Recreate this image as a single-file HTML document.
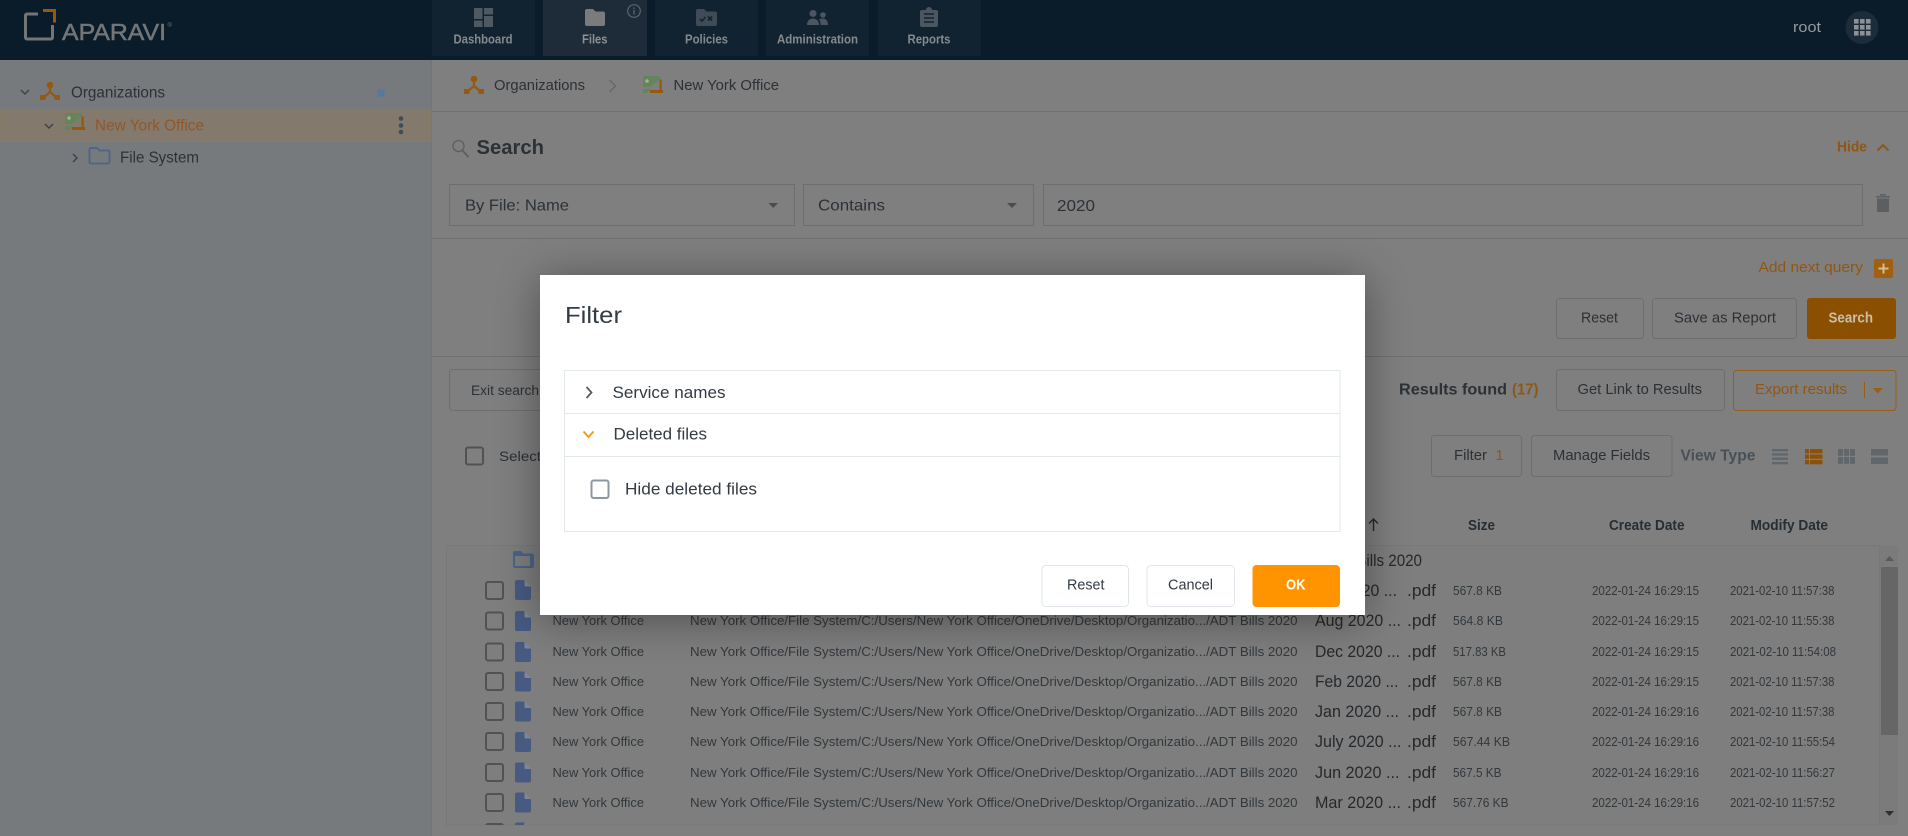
<!DOCTYPE html>
<html lang="en">
<head>
<meta charset="utf-8">
<title>Aparavi - Filter</title>
<style>
html,body{margin:0;padding:0;width:1908px;height:836px;overflow:hidden;background:#7f7f7f}
svg{display:block;position:absolute;left:0;top:0}
svg.root{filter:blur(.35px)}
text{font-family:"Liberation Sans",sans-serif;dominant-baseline:central;fill:#2c3136}
.nav{font-size:13px;font-weight:bold;fill:#858a8f}
.b{font-weight:bold}
.cell{font-size:12.5px;fill:#33383c}
.date{font-size:12.5px;fill:#33383c}
.name{font-size:16.5px;fill:#26292c}
.hd{font-size:14.5px;font-weight:bold;fill:#262e35}
.box{fill:none;stroke:#6c6f71;stroke-width:1}
.o{fill:#8f5716}
.m{fill:#333b43}
</style>
</head>
<body>
<svg class="root" width="1908" height="836" viewBox="0 0 1908 836" xmlns="http://www.w3.org/2000/svg">
<defs>
<g id="org" fill="#96590f">
  <circle cx="10" cy="5" r="3.3"/>
  <path d="M10 5v7M10 12L4 17M10 12l6 5" stroke="#96590f" stroke-width="2.2" fill="none"/>
  <rect x="0" y="15" width="5.5" height="5"/>
  <rect x="14.5" y="15" width="5.5" height="5"/>
</g>
<g id="ny">
  <path d="M0 0h17v3L7 11H0z" fill="#64855a"/>
  <path d="M0 13h9l-5 4H0z" fill="#64855a"/>
  <circle cx="4" cy="5" r="1.8" fill="#a3b09c"/>
  <path d="M16.500 3.500h2.200V14H20v3H7v-3h9.500z" fill="#96590f"/>
</g>
<g id="doc">
  <path d="M2 0h7l7 7v11a2 2 0 0 1-2 2H2a2 2 0 0 1-2-2V2a2 2 0 0 1 2-2z" fill="#465a82"/>
  <path d="M9.500 0v5.500a1 1 0 0 0 1 1H16z" fill="#7d8799"/>
</g>
<path id="fold" d="M2 0h6l2.500 2.500H19a2 2 0 0 1 2 2V15a2 2 0 0 1-2 2H2a2 2 0 0 1-2-2V2a2 2 0 0 1 2-2z"/>
<rect id="cb" width="17" height="17" rx="2" fill="none" stroke="#505355" stroke-width="2"/>
<filter id="shadow" x="-20%" y="-30%" width="140%" height="170%">
  <feGaussianBlur stdDeviation="22"/>
</filter>
</defs>

<!-- base -->
<rect width="1908" height="836" fill="#7f7f7f"/>

<!-- sidebar -->
<rect x="0" y="60" width="431" height="776" fill="#777a7c"/>
<rect x="431" y="60" width="1" height="776" fill="#727475"/>
<path d="M21 90l4 4 4-4" fill="none" stroke="#3c444a" stroke-width="1.500"/>
<use href="#org" x="40" y="80"/>
<text x="71" y="93" font-size="15.500" textLength="94" lengthAdjust="spacingAndGlyphs" fill="#262e35">Organizations</text>
<circle cx="381" cy="93" r="4" fill="#567a9e"/>
<rect x="0" y="109.500" width="431" height="32" fill="#84796d" stroke="#8a7a64"/>
<path d="M45 124l4 4 4-4" fill="none" stroke="#3c444a" stroke-width="1.500"/>
<use href="#ny" x="65" y="113"/>
<text x="95" y="126" font-size="15.500" textLength="109" lengthAdjust="spacingAndGlyphs" style="fill:#90582a">New York Office</text>
<circle cx="401" cy="118.500" r="2.300" fill="#3f4b57"/>
<circle cx="401" cy="125.500" r="2.300" fill="#3f4b57"/>
<circle cx="401" cy="132" r="2.300" fill="#3f4b57"/>
<path d="M73 154l4 4-4 4" fill="none" stroke="#3c444a" stroke-width="1.500"/>
<g transform="translate(89,147)"><path d="M2 1h6l2.500 2.500H19a1.500 1.500 0 0 1 1.500 1.500v10a1.500 1.500 0 0 1-1.500 1.500H2A1.500 1.500 0 0 1 .5 15V2A1.500 1.500 0 0 1 2 1z" fill="none" stroke="#4a648c" stroke-width="1.800"/></g>
<text x="120" y="158" font-size="15.500" textLength="79" lengthAdjust="spacingAndGlyphs" fill="#262e35">File System</text>

<!-- header -->
<rect x="0" y="0" width="1908" height="60" fill="#0a1c29"/>
<g>
  <path d="M38 14H27a1.500 1.500 0 0 0-1.500 1.500v22A1.500 1.500 0 0 0 27 39h24a1.500 1.500 0 0 0 1.500-1.500V25" fill="none" stroke="#737577" stroke-width="3"/>
  <path d="M43 10.500h11.500V22.500" fill="none" stroke="#96590f" stroke-width="3"/>
  <text x="62" y="32" font-size="23" textLength="104" lengthAdjust="spacingAndGlyphs" style="fill:#737577;stroke:#737577;stroke-width:.5">APARAVI</text>
  <text x="167.500" y="26" font-size="6" style="fill:#737577">®</text>
</g>
<rect x="432" y="0" width="103" height="56" fill="#112331"/>
<rect x="543" y="0" width="104" height="56" fill="#1e2c39"/>
<rect x="655" y="0" width="103" height="56" fill="#112331"/>
<rect x="766" y="0" width="103" height="56" fill="#112331"/>
<rect x="878" y="0" width="103" height="56" fill="#112331"/>
<g fill="#4e5962">
  <rect x="474" y="8" width="8.500" height="11"/><rect x="484" y="8" width="9" height="6.500"/>
  <rect x="474" y="20.500" width="8.500" height="6.500"/><rect x="484" y="16" width="9" height="11"/>
</g>
<path d="M587 9h6l2.500 2.500H603a2 2 0 0 1 2 2V24a2 2 0 0 1-2 2H587a2 2 0 0 1-2-2V11a2 2 0 0 1 2-2z" fill="#7a7b7c"/>
<circle cx="634" cy="11" r="6.300" fill="none" stroke="#596570" stroke-width="1.200"/>
<rect x="633.300" y="10" width="1.400" height="4.500" fill="#596570"/><rect x="633.300" y="7.500" width="1.400" height="1.400" fill="#596570"/>
<path d="M698 9h6l2.500 2.500H715a2 2 0 0 1 2 2V24a2 2 0 0 1-2 2H698a2 2 0 0 1-2-2V11a2 2 0 0 1 2-2z" fill="#3f4b57"/>
<path d="M700 19l2 2 3.500-4M708 16.500l4 4M712 16.500l-4 4" fill="none" stroke="#112331" stroke-width="1.600"/>
<g fill="#4b5660">
  <circle cx="813" cy="13.500" r="3.500"/><circle cx="823" cy="15" r="2.800"/>
  <path d="M807 25c0-4 2.500-6.500 6-6.500s6 2.500 6 6.500z"/><path d="M820.500 25c0-3-.500-4.500-1.500-5.500 1-.7 2.500-1 4-1 3 0 5 2.500 5 6.500z"/>
</g>
<path d="M922 10h4a3 3 0 0 1 6 0h4a2 2 0 0 1 2 2v13a2 2 0 0 1-2 2h-14a2 2 0 0 1-2-2V12a2 2 0 0 1 2-2z" fill="#4b5660"/>
<path d="M924 14h10M924 18h10M924 22h10" stroke="#112331" stroke-width="1.600"/>
<text class="nav" x="453.500" y="39" textLength="59" lengthAdjust="spacingAndGlyphs">Dashboard</text>
<text class="nav" x="582" y="39" textLength="25.500" lengthAdjust="spacingAndGlyphs" style="fill:#8e9193">Files</text>
<text class="nav" x="685" y="39" textLength="43" lengthAdjust="spacingAndGlyphs">Policies</text>
<text class="nav" x="777" y="39" textLength="81" lengthAdjust="spacingAndGlyphs">Administration</text>
<text class="nav" x="907.500" y="39" textLength="43" lengthAdjust="spacingAndGlyphs">Reports</text>
<text x="1793" y="27.500" font-size="15" textLength="28" lengthAdjust="spacingAndGlyphs" style="fill:#969b9f">root</text>
<circle cx="1862" cy="27.500" r="16.500" fill="#1c2c3a"/>
<g fill="#8c9196">
  <rect x="1854" y="19" width="4.600" height="4.600"/><rect x="1860" y="19" width="4.600" height="4.600"/><rect x="1866" y="19" width="4.600" height="4.600"/>
  <rect x="1854" y="25" width="4.600" height="4.600"/><rect x="1860" y="25" width="4.600" height="4.600"/><rect x="1866" y="25" width="4.600" height="4.600"/>
  <rect x="1854" y="31" width="4.600" height="4.600"/><rect x="1860" y="31" width="4.600" height="4.600"/><rect x="1866" y="31" width="4.600" height="4.600"/>
</g>

<!-- breadcrumb -->
<use href="#org" x="464" y="74"/>
<text x="494" y="86" font-size="14.500" textLength="91" lengthAdjust="spacingAndGlyphs" fill="#30363b">Organizations</text>
<path d="M609.500 80l6 6-6 6" fill="none" stroke="#666" stroke-width="1.300"/>
<use href="#ny" x="643" y="76"/>
<text x="673.500" y="86" font-size="14.500" textLength="105.500" lengthAdjust="spacingAndGlyphs" fill="#30363b">New York Office</text>
<rect x="432" y="111" width="1476" height="1" fill="#6f6f6f"/>

<!-- search -->
<circle cx="458.500" cy="146" r="5.500" fill="none" stroke="#5c5f61" stroke-width="1.300"/>
<path d="M462.500 150.500l6 6.500" stroke="#5c5f61" stroke-width="1.800"/>
<text x="476.500" y="148" font-size="20" class="b" textLength="67.500" lengthAdjust="spacingAndGlyphs" fill="#1c2025">Search</text>
<text class="o" x="1837" y="147.500" font-size="14.500" font-weight="bold" textLength="30" lengthAdjust="spacingAndGlyphs">Hide</text>
<path d="M1877.500 150.500l5.500-5.500 5.500 5.500" fill="none" stroke="#8f5716" stroke-width="2"/>
<rect class="box" x="449.500" y="184.500" width="345" height="41"/>
<text x="465" y="206" font-size="16" textLength="104" lengthAdjust="spacingAndGlyphs">By File: Name</text>
<path d="M768.500 203h9.500l-4.750 5z" fill="#4a4d50"/>
<rect class="box" x="803.500" y="184.500" width="230" height="41"/>
<text x="818" y="206" font-size="16" textLength="67" lengthAdjust="spacingAndGlyphs">Contains</text>
<path d="M1007 203h10l-5 5z" fill="#4a4d50"/>
<rect class="box" x="1043.500" y="184.500" width="819" height="41"/>
<text x="1057" y="206.500" font-size="16" textLength="38" lengthAdjust="spacingAndGlyphs">2020</text>
<path d="M1876 196h14v1.500h-14zM1880 194h6v1.500h-6zM1877 198.500h12V211a1 1 0 0 1-1 1h-10a1 1 0 0 1-1-1z" fill="#5c5f61"/>
<rect x="432" y="238" width="1476" height="1" fill="#6f6f6f"/>
<text class="o" x="1758.500" y="268" font-size="14.500" textLength="104.500" lengthAdjust="spacingAndGlyphs">Add next query</text>
<rect x="1874" y="259" width="19" height="19" rx="2" fill="#a0600d"/>
<path d="M1883.500 263.500v10M1878.500 268.500h10" stroke="#d6bd94" stroke-width="2"/>
<rect class="box" x="1556.500" y="298.500" width="87" height="40" rx="3"/>
<text x="1581" y="318.500" font-size="14.500" textLength="37" lengthAdjust="spacingAndGlyphs">Reset</text>
<rect class="box" x="1652.500" y="298.500" width="144" height="40" rx="3"/>
<text x="1674" y="318.500" font-size="14.500" textLength="102" lengthAdjust="spacingAndGlyphs">Save as Report</text>
<rect x="1807" y="298" width="89" height="41" rx="3" fill="#8a5000"/>
<text x="1828.500" y="318.500" font-size="14.500" font-weight="bold" textLength="44.500" lengthAdjust="spacingAndGlyphs" style="fill:#cbbfac">Search</text>
<rect x="432" y="356" width="1476" height="1" fill="#6f6f6f"/>

<!-- results toolbar -->
<rect class="box" x="449.500" y="369.500" width="160" height="41" rx="3"/>
<text x="471" y="390" font-size="14" textLength="68" lengthAdjust="spacingAndGlyphs">Exit search</text>
<use href="#cb" x="466" y="447.500"/>
<text x="499" y="456" font-size="14" textLength="42" lengthAdjust="spacingAndGlyphs">Select</text>
<text x="1399" y="390" font-size="16" font-weight="bold" textLength="108" lengthAdjust="spacingAndGlyphs" fill="#1e2a33">Results found</text>
<text class="o" x="1512" y="390" font-size="16" font-weight="bold" textLength="26.500" lengthAdjust="spacingAndGlyphs">(17)</text>
<rect class="box" x="1556.500" y="369.500" width="168" height="41" rx="3"/>
<text x="1577.500" y="390" font-size="14.500" textLength="124.500" lengthAdjust="spacingAndGlyphs">Get Link to Results</text>
<rect x="1733.500" y="370.500" width="162.500" height="40" rx="3" fill="none" stroke="#985f18"/>
<text class="o" x="1755" y="390" font-size="14.500" textLength="92" lengthAdjust="spacingAndGlyphs">Export results</text>
<rect x="1864" y="382" width="1" height="16" fill="#985f18"/>
<path d="M1872.500 388h10.500l-5.250 5.500z" fill="#985f18"/>
<rect class="box" x="1431.500" y="435.500" width="90" height="41" rx="3"/>
<text x="1454" y="456" font-size="14.500" textLength="33" lengthAdjust="spacingAndGlyphs">Filter</text>
<text class="o" x="1495.500" y="456" font-size="14.500">1</text>
<rect class="box" x="1531.500" y="435.500" width="140.500" height="41" rx="3"/>
<text x="1553" y="456" font-size="14.500" textLength="97" lengthAdjust="spacingAndGlyphs">Manage Fields</text>
<text x="1680.500" y="456" font-size="16" font-weight="bold" textLength="75" lengthAdjust="spacingAndGlyphs" style="fill:#485058">View Type</text>
<g fill="#5f666c">
  <rect x="1772" y="449" width="16" height="2.300"/><rect x="1772" y="453.300" width="16" height="2.300"/><rect x="1772" y="457.600" width="16" height="2.300"/><rect x="1772" y="462" width="16" height="2.300"/>
</g>
<g fill="#8a5208">
  <rect x="1805" y="449" width="4" height="4.300"/><rect x="1810" y="449" width="12.500" height="4.300"/>
  <rect x="1805" y="454.500" width="4" height="4.300"/><rect x="1810" y="454.500" width="12.500" height="4.300"/>
  <rect x="1805" y="460" width="4" height="4.300"/><rect x="1810" y="460" width="12.500" height="4.300"/>
</g>
<g fill="#5f666c">
  <rect x="1838" y="449" width="5" height="6.800"/><rect x="1844" y="449" width="5" height="6.800"/><rect x="1850" y="449" width="5" height="6.800"/>
  <rect x="1838" y="457" width="5" height="6.800"/><rect x="1844" y="457" width="5" height="6.800"/><rect x="1850" y="457" width="5" height="6.800"/>
  <rect x="1871" y="449" width="17" height="6.500"/><rect x="1871" y="457.500" width="17" height="6.500"/>
</g>

<!-- table header -->
<path d="M1373.500 531v-12M1369 523.500l4.500-4.500 4.500 4.500" fill="none" stroke="#26292c" stroke-width="1.400"/>
<text class="hd" x="1468" y="526" textLength="27" lengthAdjust="spacingAndGlyphs">Size</text>
<text class="hd" x="1609" y="526" textLength="75.500" lengthAdjust="spacingAndGlyphs">Create Date</text>
<text class="hd" x="1750.500" y="526" textLength="77.500" lengthAdjust="spacingAndGlyphs">Modify Date</text>

<!-- table -->
<rect x="446.500" y="545.500" width="1433" height="279.500" fill="#7e7e7e" stroke="#787878"/>
<rect x="1880" y="546" width="18" height="279" fill="#7b7b7b"/>
<rect x="1881" y="567" width="17" height="168" fill="#666"/>
<path d="M1885 561h9l-4.500-5z" fill="#5a5a5a"/>
<path d="M1885 811h9l-4.500 5z" fill="#2f2f2f"/>
<svg x="446" y="546" width="1434" height="279" viewBox="446 546 1434 279">
<use href="#fold" x="513" y="551" style="fill:#4a648c"/><rect x="515" y="556" width="15" height="10" fill="#7e7e7e"/>
<text class="name" x="1322" y="561" textLength="100" lengthAdjust="spacingAndGlyphs">ADT Bills 2020</text>

<use href="#cb" x="486" y="582"/><use href="#doc" x="515" y="580"/>
<text class="name" x="1315" y="591" textLength="82" lengthAdjust="spacingAndGlyphs">Apr 2020 ...</text><text class="name" x="1407" y="591" textLength="29" lengthAdjust="spacingAndGlyphs">.pdf</text>
<text class="cell" x="1453" y="591" textLength="49" lengthAdjust="spacingAndGlyphs">567.8 KB</text>
<text class="date" x="1592" y="591" textLength="107" lengthAdjust="spacingAndGlyphs">2022-01-24 16:29:15</text>
<text class="date" x="1730" y="591" textLength="104.500" lengthAdjust="spacingAndGlyphs">2021-02-10 11:57:38</text>

<use href="#cb" x="486" y="612.500"/><use href="#doc" x="515" y="611"/>
<text class="cell" x="552.500" y="621" textLength="91.500" lengthAdjust="spacingAndGlyphs">New York Office</text>
<text class="cell" x="690" y="621" textLength="607.500" lengthAdjust="spacingAndGlyphs">New York Office/File System/C:/Users/New York Office/OneDrive/Desktop/Organizatio.../ADT Bills 2020</text>
<text class="name" x="1315" y="621" textLength="86" lengthAdjust="spacingAndGlyphs">Aug 2020 ...</text><text class="name" x="1407" y="621" textLength="29" lengthAdjust="spacingAndGlyphs">.pdf</text>
<text class="cell" x="1453" y="621" textLength="50" lengthAdjust="spacingAndGlyphs">564.8 KB</text>
<text class="date" x="1592" y="621" textLength="107" lengthAdjust="spacingAndGlyphs">2022-01-24 16:29:15</text>
<text class="date" x="1730" y="621" textLength="104.500" lengthAdjust="spacingAndGlyphs">2021-02-10 11:55:38</text>

<use href="#cb" x="486" y="643.500"/><use href="#doc" x="515" y="642"/>
<text class="cell" x="552.500" y="652" textLength="91.500" lengthAdjust="spacingAndGlyphs">New York Office</text>
<text class="cell" x="690" y="652" textLength="607.500" lengthAdjust="spacingAndGlyphs">New York Office/File System/C:/Users/New York Office/OneDrive/Desktop/Organizatio.../ADT Bills 2020</text>
<text class="name" x="1315" y="652" textLength="85" lengthAdjust="spacingAndGlyphs">Dec 2020 ...</text><text class="name" x="1407" y="652" textLength="29" lengthAdjust="spacingAndGlyphs">.pdf</text>
<text class="cell" x="1453" y="652" textLength="53" lengthAdjust="spacingAndGlyphs">517.83 KB</text>
<text class="date" x="1592" y="652" textLength="107" lengthAdjust="spacingAndGlyphs">2022-01-24 16:29:15</text>
<text class="date" x="1730" y="652" textLength="106" lengthAdjust="spacingAndGlyphs">2021-02-10 11:54:08</text>

<use href="#cb" x="486" y="673"/><use href="#doc" x="515" y="671.500"/>
<text class="cell" x="552.500" y="682" textLength="91.500" lengthAdjust="spacingAndGlyphs">New York Office</text>
<text class="cell" x="690" y="682" textLength="607.500" lengthAdjust="spacingAndGlyphs">New York Office/File System/C:/Users/New York Office/OneDrive/Desktop/Organizatio.../ADT Bills 2020</text>
<text class="name" x="1315" y="682" textLength="83.500" lengthAdjust="spacingAndGlyphs">Feb 2020 ...</text><text class="name" x="1407" y="682" textLength="29" lengthAdjust="spacingAndGlyphs">.pdf</text>
<text class="cell" x="1453" y="682" textLength="49" lengthAdjust="spacingAndGlyphs">567.8 KB</text>
<text class="date" x="1592" y="682" textLength="107" lengthAdjust="spacingAndGlyphs">2022-01-24 16:29:15</text>
<text class="date" x="1730" y="682" textLength="104.500" lengthAdjust="spacingAndGlyphs">2021-02-10 11:57:38</text>

<use href="#cb" x="486" y="703"/><use href="#doc" x="515" y="701.500"/>
<text class="cell" x="552.500" y="712" textLength="91.500" lengthAdjust="spacingAndGlyphs">New York Office</text>
<text class="cell" x="690" y="712" textLength="607.500" lengthAdjust="spacingAndGlyphs">New York Office/File System/C:/Users/New York Office/OneDrive/Desktop/Organizatio.../ADT Bills 2020</text>
<text class="name" x="1315" y="712" textLength="84" lengthAdjust="spacingAndGlyphs">Jan 2020 ...</text><text class="name" x="1407" y="712" textLength="29" lengthAdjust="spacingAndGlyphs">.pdf</text>
<text class="cell" x="1453" y="712" textLength="49" lengthAdjust="spacingAndGlyphs">567.8 KB</text>
<text class="date" x="1592" y="712" textLength="107" lengthAdjust="spacingAndGlyphs">2022-01-24 16:29:16</text>
<text class="date" x="1730" y="712" textLength="104.500" lengthAdjust="spacingAndGlyphs">2021-02-10 11:57:38</text>

<use href="#cb" x="486" y="733"/><use href="#doc" x="515" y="732"/>
<text class="cell" x="552.500" y="742" textLength="91.500" lengthAdjust="spacingAndGlyphs">New York Office</text>
<text class="cell" x="690" y="742" textLength="607.500" lengthAdjust="spacingAndGlyphs">New York Office/File System/C:/Users/New York Office/OneDrive/Desktop/Organizatio.../ADT Bills 2020</text>
<text class="name" x="1315" y="742" textLength="86.500" lengthAdjust="spacingAndGlyphs">July 2020 ...</text><text class="name" x="1407" y="742" textLength="29" lengthAdjust="spacingAndGlyphs">.pdf</text>
<text class="cell" x="1453" y="742" textLength="57" lengthAdjust="spacingAndGlyphs">567.44 KB</text>
<text class="date" x="1592" y="742" textLength="107" lengthAdjust="spacingAndGlyphs">2022-01-24 16:29:16</text>
<text class="date" x="1730" y="742" textLength="105" lengthAdjust="spacingAndGlyphs">2021-02-10 11:55:54</text>

<use href="#cb" x="486" y="764"/><use href="#doc" x="515" y="762.500"/>
<text class="cell" x="552.500" y="773" textLength="91.500" lengthAdjust="spacingAndGlyphs">New York Office</text>
<text class="cell" x="690" y="773" textLength="607.500" lengthAdjust="spacingAndGlyphs">New York Office/File System/C:/Users/New York Office/OneDrive/Desktop/Organizatio.../ADT Bills 2020</text>
<text class="name" x="1315" y="773" textLength="84.500" lengthAdjust="spacingAndGlyphs">Jun 2020 ...</text><text class="name" x="1407" y="773" textLength="29" lengthAdjust="spacingAndGlyphs">.pdf</text>
<text class="cell" x="1453" y="773" textLength="48.500" lengthAdjust="spacingAndGlyphs">567.5 KB</text>
<text class="date" x="1592" y="773" textLength="107" lengthAdjust="spacingAndGlyphs">2022-01-24 16:29:16</text>
<text class="date" x="1730" y="773" textLength="105" lengthAdjust="spacingAndGlyphs">2021-02-10 11:56:27</text>

<use href="#cb" x="486" y="794"/><use href="#doc" x="515" y="792.500"/>
<text class="cell" x="552.500" y="803" textLength="91.500" lengthAdjust="spacingAndGlyphs">New York Office</text>
<text class="cell" x="690" y="803" textLength="607.500" lengthAdjust="spacingAndGlyphs">New York Office/File System/C:/Users/New York Office/OneDrive/Desktop/Organizatio.../ADT Bills 2020</text>
<text class="name" x="1315" y="803" textLength="86" lengthAdjust="spacingAndGlyphs">Mar 2020 ...</text><text class="name" x="1407" y="803" textLength="29" lengthAdjust="spacingAndGlyphs">.pdf</text>
<text class="cell" x="1453" y="803" textLength="55.500" lengthAdjust="spacingAndGlyphs">567.76 KB</text>
<text class="date" x="1592" y="803" textLength="107" lengthAdjust="spacingAndGlyphs">2022-01-24 16:29:16</text>
<text class="date" x="1730" y="803" textLength="105" lengthAdjust="spacingAndGlyphs">2021-02-10 11:57:52</text>

<use href="#cb" x="486" y="824"/><use href="#doc" x="515" y="822.500"/>
</svg>

<!-- modal -->
<rect x="540" y="279" width="825" height="340" fill="#000" opacity=".38" filter="url(#shadow)"/>
<rect x="540" y="275" width="825" height="340" fill="#fff"/>
<text class="m" x="565" y="315" font-size="23.500" textLength="57" lengthAdjust="spacingAndGlyphs">Filter</text>
<rect x="564.500" y="370.500" width="775.500" height="161" fill="none" stroke="#e3e8ec"/>
<rect x="565" y="413" width="775" height="1" fill="#e3e8ec"/>
<rect x="565" y="456" width="775" height="1" fill="#e3e8ec"/>
<path d="M586.500 387l5 5.500-5 5.500" fill="none" stroke="#555c62" stroke-width="1.800"/>
<text class="m" x="612.500" y="393" font-size="16.500" textLength="113" lengthAdjust="spacingAndGlyphs">Service names</text>
<path d="M583.500 431.500l5 5.500 5-5.500" fill="none" stroke="#ff9400" stroke-width="1.800"/>
<text class="m" x="613.500" y="434.500" font-size="16.500" textLength="93.500" lengthAdjust="spacingAndGlyphs">Deleted files</text>
<rect x="591.500" y="480.500" width="17" height="17.500" rx="2" fill="none" stroke="#8d97a3" stroke-width="2"/>
<text class="m" x="625" y="489.500" font-size="16.500" textLength="132" lengthAdjust="spacingAndGlyphs">Hide deleted files</text>
<rect x="1042" y="565.500" width="86.500" height="41" rx="4" fill="#fff" stroke="#dfe5ea"/>
<text class="m" x="1067" y="585.500" font-size="14.500" textLength="37.500" lengthAdjust="spacingAndGlyphs">Reset</text>
<rect x="1147" y="565.500" width="87.500" height="41" rx="4" fill="#fff" stroke="#dfe5ea"/>
<text class="m" x="1168" y="585.500" font-size="14.500" textLength="45" lengthAdjust="spacingAndGlyphs">Cancel</text>
<rect x="1252.500" y="565" width="87.500" height="42" rx="4" fill="#ff9400"/>
<text x="1286" y="585.500" font-size="14.500" font-weight="bold" textLength="19.500" lengthAdjust="spacingAndGlyphs" style="fill:#fff">OK</text>
</svg>
</body>
</html>
